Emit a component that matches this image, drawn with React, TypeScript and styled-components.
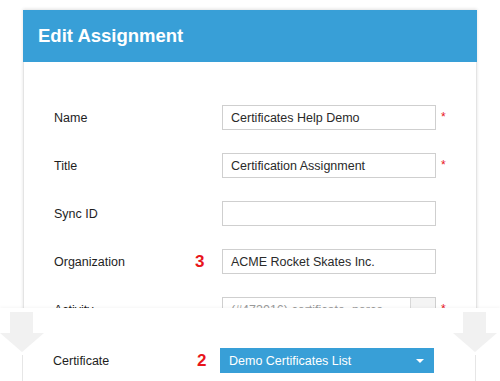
import React from 'react';
import styled, { createGlobalStyle } from 'styled-components';

const GlobalStyle = createGlobalStyle`
  html, body {
    margin: 0;
    padding: 0;
    background: #fff;
  }
  body {
    font-family: 'Liberation Sans', Arial, sans-serif;
  }
`;

const BLUE = '#389fd7';
const RED = '#e8151b';

const Page = styled.div`
  position: relative;
  width: 500px;
  height: 381px;
  overflow: hidden;
  padding-top: 10px;
  box-sizing: border-box;
`;

const Dialog = styled.div`
  margin-left: 23px;
  width: 454px;
  height: 400px;
  background: #fff;
  border-left: 1px solid #e4e4e4;
  border-right: 1px solid #e4e4e4;
  box-shadow: 0 -1px 3px rgba(0, 0, 0, 0.12);
  box-sizing: border-box;
`;

const Header = styled.div`
  height: 52px;
  background: ${BLUE};
  display: flex;
  align-items: center;
  padding-left: 15px;
  margin: 0 -1px;
`;

const Title = styled.h2`
  margin: 0;
  color: #fff;
  font-size: 18.5px;
  font-weight: bold;
`;

const Body = styled.div`
  padding: 43px 0 0 30px;
  display: flex;
  flex-direction: column;
  gap: 23px;
`;

const Row = styled.div<{ $label: number; $marker: number }>`
  display: grid;
  grid-template-columns: ${p => p.$label}px ${p => p.$marker}px 214px 12px;
  align-items: center;
  height: 25px;
`;

const Label = styled.div`
  font-size: 12.5px;
  color: #1e1e1e;
`;

const Marker = styled.div`
  font-size: 17px;
  font-weight: bold;
  color: ${RED};
`;

const Field = styled.div`
  height: 25px;
  box-sizing: border-box;
  border: 1px solid #cfcfcf;
  background: #fff;
  font-size: 12.5px;
  color: #2a2a2a;
  display: flex;
  align-items: center;
  padding-left: 8px;
`;

const SelectBox = styled(Field)`
  padding-left: 0;
  color: #9a9a9a;
`;

const SelectText = styled.div`
  flex: 1;
  min-width: 0;
  padding: 0 14px 0 8px;
  white-space: nowrap;
  overflow: hidden;
  text-overflow: ellipsis;
`;

const SelectButton = styled.div`
  width: 24px;
  height: 100%;
  border-left: 1px solid #d8d8d8;
  background: #f4f4f4;
  display: flex;
  align-items: center;
  justify-content: center;
`;

const Caret = styled.span<{ $color: string }>`
  width: 0;
  height: 0;
  border-left: 4px solid transparent;
  border-right: 4px solid transparent;
  border-top: 4px solid ${p => p.$color};
`;

const Required = styled.div`
  font-size: 12px;
  color: ${RED};
  padding-left: 5px;
  align-self: start;
  margin-top: 5px;
`;

const Band = styled.div`
  position: absolute;
  left: 0;
  right: 0;
  top: 308px;
  bottom: 0;
  background: #fff;
  box-shadow: 0 -1px 3px rgba(0, 0, 0, 0.04);
  display: flex;
`;

const Side = styled.div`
  width: 44px;
  display: flex;
  flex-direction: column;
  align-items: center;
  padding-top: 4px;
`;

const RightSide = styled(Side)`
  margin-left: auto;
  margin-right: 3px;
`;

const Guide = styled.div`
  width: 1px;
  flex: 1;
  margin-top: 3px;
  background: #e6e6e6;
`;

const BandContent = styled.div`
  padding: 40px 0 0 9px;
`;

const BlueSelect = styled.div`
  height: 25px;
  box-sizing: border-box;
  background: ${BLUE};
  color: #fff;
  font-size: 12.5px;
  display: flex;
  align-items: center;
  justify-content: space-between;
  padding: 0 10px 0 9px;
`;

const Arrow = () => (
  <svg width="44" height="40" viewBox="0 0 44 40">
    <path d="M10 0 H33 V21 H44 L22 40 L0 21 H10 Z" fill="#f1f1f1" />
  </svg>
);

const fields = [
  { label: 'Name', value: 'Certificates Help Demo', required: true },
  { label: 'Title', value: 'Certification Assignment', required: true },
  { label: 'Sync ID', value: '', required: false },
  { label: 'Organization', value: 'ACME Rocket Skates Inc.', required: false, marker: '3' },
];

export default function App() {
  return (
    <>
      <GlobalStyle />
      <Page>
        <Dialog>
          <Header>
            <Title>Edit Assignment</Title>
          </Header>
          <Body>
            {fields.map(f => (
              <Row key={f.label} $label={141} $marker={27}>
                <Label>{f.label}</Label>
                <Marker>{f.marker}</Marker>
                <Field>{f.value}</Field>
                <Required>{f.required ? '*' : ''}</Required>
              </Row>
            ))}
            <Row $label={141} $marker={27}>
              <Label>Activity</Label>
              <Marker />
              <SelectBox>
                <SelectText>(#473016) certificate_percentage</SelectText>
                <SelectButton>
                  <Caret $color="#999" />
                </SelectButton>
              </SelectBox>
              <Required>*</Required>
            </Row>
          </Body>
        </Dialog>
        <Band>
          <Side>
            <Arrow />
            <Guide />
          </Side>
          <BandContent>
            <Row $label={144} $marker={23}>
              <Label>Certificate</Label>
              <Marker>2</Marker>
              <BlueSelect>
                Demo Certificates List
                <Caret $color="#fff" />
              </BlueSelect>
            </Row>
          </BandContent>
          <RightSide>
            <Arrow />
            <Guide />
          </RightSide>
        </Band>
      </Page>
    </>
  );
}
